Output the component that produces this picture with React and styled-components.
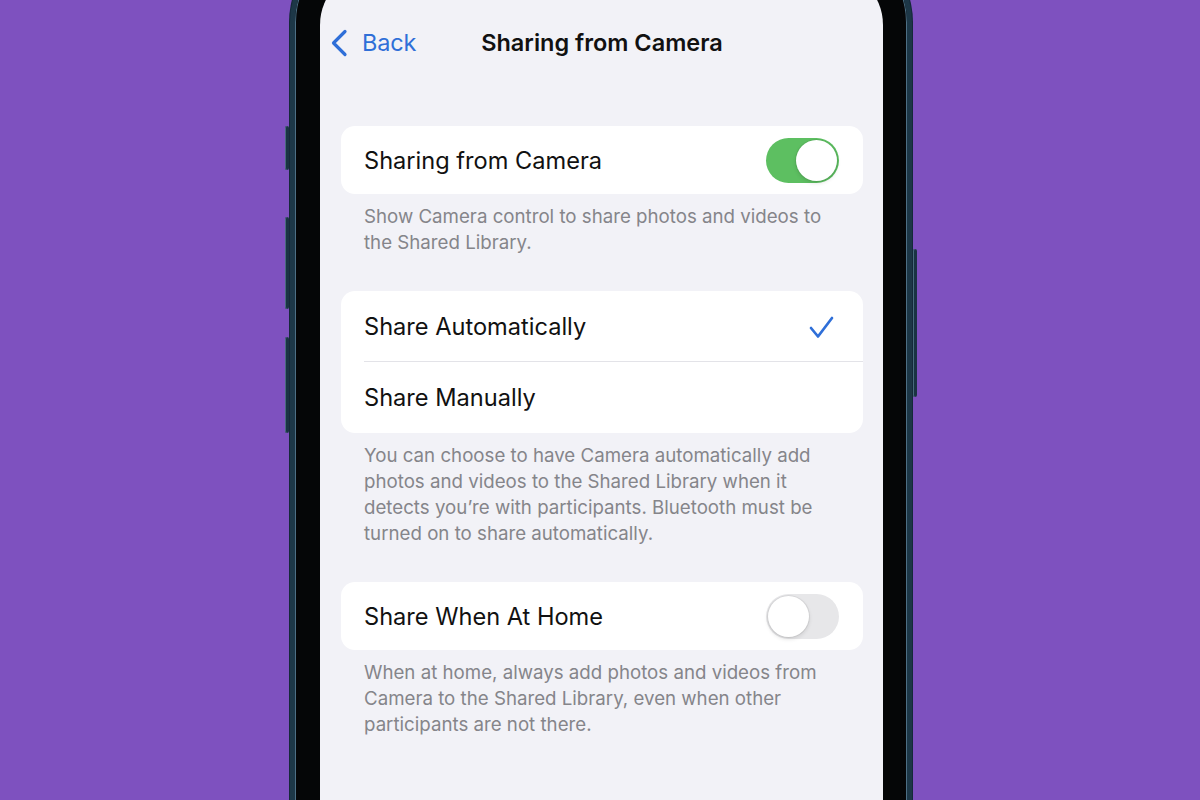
import React, { useState } from "react";
import styled, { createGlobalStyle } from "styled-components";

const GlobalStyle = createGlobalStyle`
  html, body {
    margin: 0;
    padding: 0;
    background: #7e51bf;
  }
  body {
    font-family: Inter, "Noto Sans", "Liberation Sans", sans-serif;
    -webkit-font-smoothing: antialiased;
  }
`;

const Page = styled.div`
  width: 1200px;
  height: 800px;
  overflow: hidden;
  background: #7e51bf;
  display: flex;
  justify-content: center;
`;

const Phone = styled.div`
  position: relative;
  flex: none;
  width: 622px;
  height: 960px;
  margin-top: -62px;
  margin-left: 2px;
  box-sizing: border-box;
  padding: 26px 24px 0 25px;
  border-radius: 84px;
  background: #050607;
  border: 5px solid #1d3747;
  box-shadow: inset 0 0 0 1px #4d6f84, 0 0 0 1px #15293a;
`;

const SideButton = styled.div`
  position: absolute;
  top: ${(p) => p.top}px;
  height: ${(p) => p.length}px;
  ${(p) => (p.right ? "right: -10px;" : "left: -10px;")}
  width: 4px;
  border-radius: 2px;
  background: #1a3343;
  box-shadow: inset 1px 0 0 #48697d;
`;

const Screen = styled.div`
  height: 100%;
  border-radius: 56px 56px 0 0;
  background: #f2f2f7;
  padding: 53px 20px 0 21px;
  box-sizing: border-box;
`;

const NavBar = styled.div`
  position: relative;
  display: flex;
  align-items: center;
  justify-content: center;
  height: 44px;
  margin-bottom: 60px;
`;

const BackButton = styled.button`
  position: absolute;
  left: -11px;
  top: 6px;
  display: flex;
  align-items: center;
  gap: 14px;
  padding: 0;
  border: none;
  background: none;
  color: #2f6fd8;
  font-family: inherit;
  font-size: 23.5px;
  letter-spacing: -0.2px;
  cursor: pointer;
`;

const Title = styled.h1`
  margin: -3px 0 0;
  font-size: 23.5px;
  font-weight: 600;
  letter-spacing: 0;
  color: #111;
`;

const Group = styled.div`
  background: #fff;
  border-radius: 14px;
  overflow: hidden;
`;

const Row = styled.div`
  display: flex;
  align-items: center;
  justify-content: space-between;
  height: ${(p) => p.height || 68}px;
  padding: 0 24px 0 23px;
  position: relative;

  & + & {
    border-top: 1.5px solid #e3e3e8;
    margin-left: 23px;
    padding-left: 0;
  }
`;

const Label = styled.span`
  font-size: 23.6px;
  letter-spacing: 0;
  color: #111;
`;

const Footer = styled.p`
  margin: 10px 0 35px;
  padding: 0 28px 0 23px;
  font-size: 18.7px;
  line-height: 26px;
  letter-spacing: 0;
  color: #85858a;
`;

const Track = styled.button`
  width: 73px;
  height: 45px;
  padding: 2px;
  border: none;
  border-radius: 23px;
  background: ${(p) => (p.on ? "#5dbf61" : "#e7e7e9")};
  display: flex;
  justify-content: ${(p) => (p.on ? "flex-end" : "flex-start")};
  cursor: pointer;
`;

const Knob = styled.span`
  width: 41px;
  height: 41px;
  border-radius: 50%;
  background: #fff;
  box-shadow: 0 0 0 1px rgba(0, 0, 0, 0.06), 0 2px 4px rgba(0, 0, 0, 0.12);
`;

const CheckMark = styled.svg`
  margin-right: 5px;
  margin-top: 2px;
`;

function Toggle({ on, onChange }) {
  return (
    <Track on={on ? 1 : 0} onClick={() => onChange(!on)}>
      <Knob />
    </Track>
  );
}

function Chevron() {
  return (
    <svg width="18" height="28" viewBox="0 0 18 28" fill="none">
      <path
        d="M15 2.5 L3.5 14 L15 25.5"
        stroke="currentColor"
        strokeWidth="3.2"
        strokeLinecap="round"
        strokeLinejoin="round"
      />
    </svg>
  );
}

function Check() {
  return (
    <CheckMark width="25" height="23" viewBox="0 0 25 23" fill="none">
      <path
        d="M2 12 L9 20.5 L23 2"
        stroke="#2f6fd8"
        strokeWidth="2.7"
        strokeLinecap="round"
        strokeLinejoin="round"
      />
    </CheckMark>
  );
}

export default function App() {
  const [camera, setCamera] = useState(true);
  const [auto, setAuto] = useState(true);
  const [home, setHome] = useState(false);

  return (
    <Page>
      <GlobalStyle />
      <Phone>
        <SideButton top={183} length={44} />
        <SideButton top={274} length={92} />
        <SideButton top={394} length={96} />
        <SideButton right top={306} length={148} />
        <Screen>
          <NavBar>
            <BackButton>
              <Chevron />
              Back
            </BackButton>
            <Title>Sharing from Camera</Title>
          </NavBar>

          <Group>
            <Row>
              <Label>Sharing from Camera</Label>
              <Toggle on={camera} onChange={setCamera} />
            </Row>
          </Group>
          <Footer>
            Show Camera control to share photos and videos to the Shared
            Library.
          </Footer>

          <Group>
            <Row height={70} onClick={() => setAuto(true)}>
              <Label>Share Automatically</Label>
              {auto && <Check />}
            </Row>
            <Row height={71} onClick={() => setAuto(false)}>
              <Label>Share Manually</Label>
              {!auto && <Check />}
            </Row>
          </Group>
          <Footer>
            You can choose to have Camera automatically add photos and videos
            to the Shared Library when it detects you’re with participants.
            Bluetooth must be turned on to share automatically.
          </Footer>

          <Group>
            <Row>
              <Label>Share When At Home</Label>
              <Toggle on={home} onChange={setHome} />
            </Row>
          </Group>
          <Footer>
            When at home, always add photos and videos from Camera to the
            Shared Library, even when other participants are not there.
          </Footer>
        </Screen>
      </Phone>
    </Page>
  );
}
